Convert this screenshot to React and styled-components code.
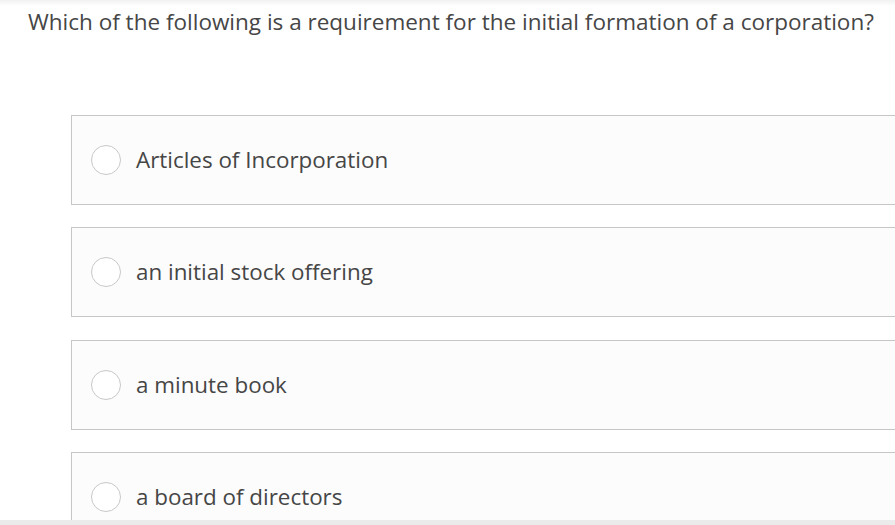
import React from "react";
import styled, { createGlobalStyle } from "styled-components";

const GlobalStyle = createGlobalStyle`
  html, body {
    margin: 0;
    padding: 0;
    background: #ebebeb;
    overflow: hidden;
  }
`;

const Page = styled.div`
  height: 520px;
  overflow: hidden;
  background: linear-gradient(to bottom, #f1f1f1 0px, #ffffff 6px);
  font-family: "Open Sans", "Liberation Sans", sans-serif;
  color: #464646;
`;

const Question = styled.h1`
  margin: 0;
  padding: 5px 0 0 28px;
  font-size: 22.5px;
  font-weight: 400;
  line-height: 34px;
  white-space: nowrap;
`;

const Options = styled.div`
  display: flex;
  flex-direction: column;
  gap: 22.4px;
  margin: 76px -20px 0 71px;
`;

const Option = styled.label`
  display: flex;
  align-items: center;
  gap: 15px;
  height: 88px;
  padding-left: 19px;
  border: 1px solid #c6c6c6;
  background: #fcfcfc;
  cursor: pointer;
`;

const Radio = styled.span`
  flex: none;
  width: 28px;
  height: 28px;
  border-radius: 50%;
  border: 1px solid #c8c8c8;
  background: #fff;
`;

const Label = styled.span`
  font-size: 22.4px;
  line-height: 28px;
`;

const answers = [
  "Articles of Incorporation",
  "an initial stock offering",
  "a minute book",
  "a board of directors",
];

export default function App() {
  return (
    <>
      <GlobalStyle />
      <Page>
        <Question>
          Which of the following is a requirement for the initial formation of a corporation?
        </Question>
        <Options>
          {answers.map((a) => (
            <Option key={a}>
              <Radio />
              <Label>{a}</Label>
            </Option>
          ))}
        </Options>
      </Page>
    </>
  );
}
